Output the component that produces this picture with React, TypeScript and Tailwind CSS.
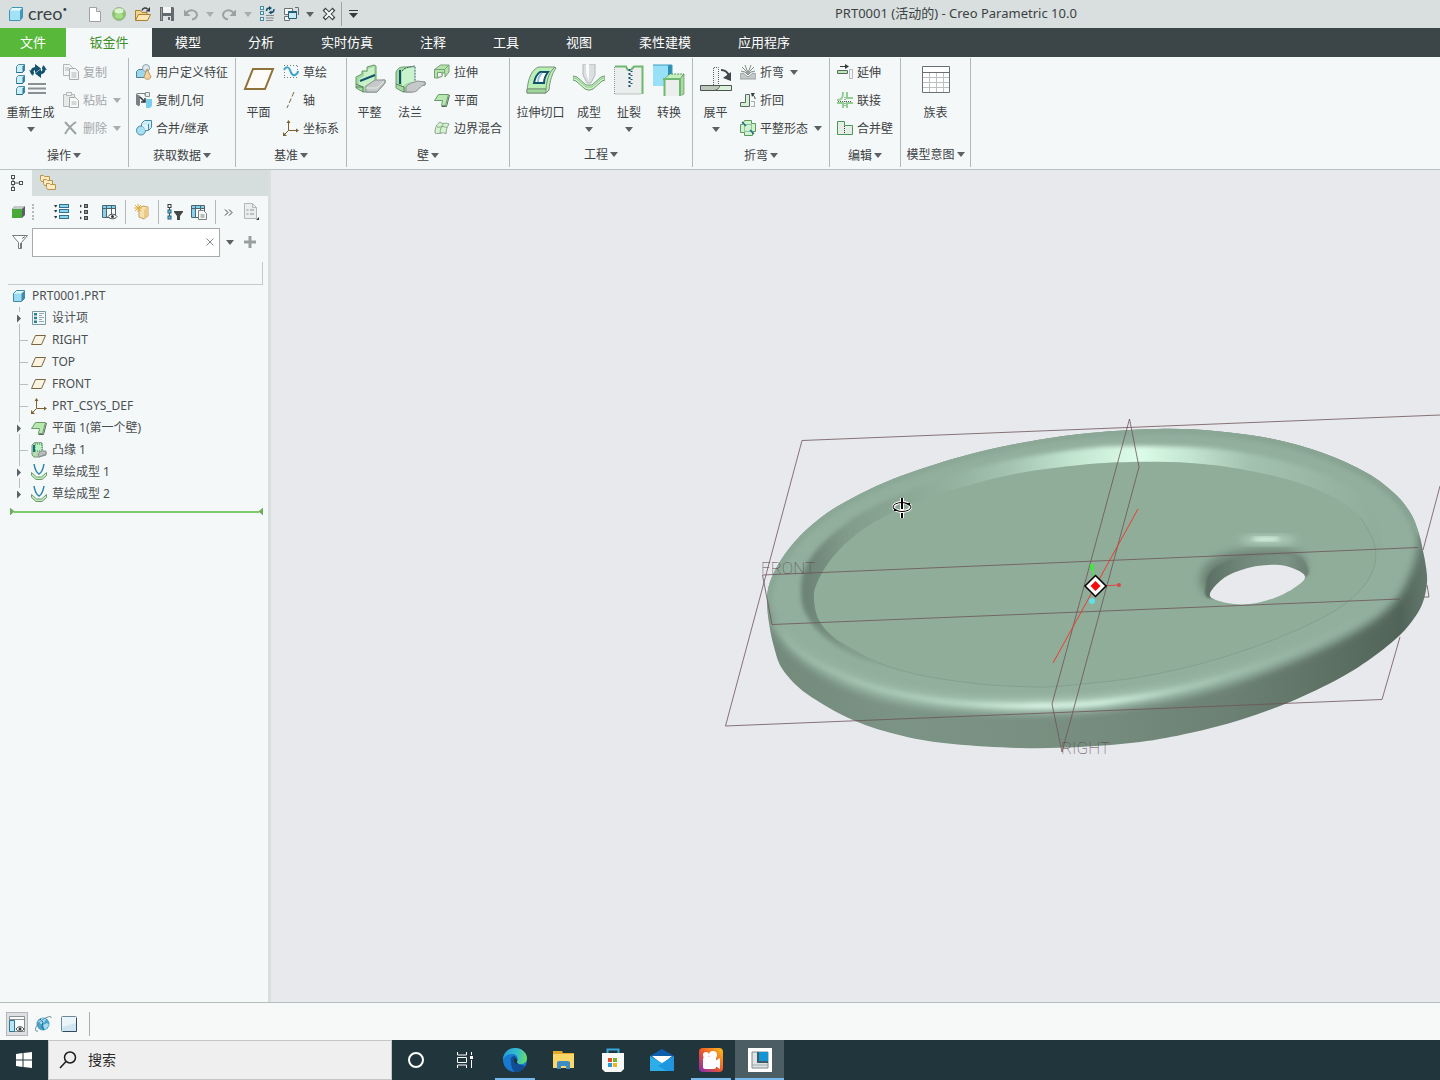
// src/App.tsx
/**
 * Creo Parametric workspace - sheet metal ribbon, model tree and graphics area
 */

import type { ReactNode } from 'react';
import clsx from 'clsx';

type Point = [number, number];

interface SvgProps {
  w?: number;
  h?: number;
  children: ReactNode;
}

function Svg({ w = 16, h = w, children }: SvgProps) {
  return (
    <svg width={w} height={h} viewBox={`0 0 ${w} ${h}`} fill="none" className="shrink-0" aria-hidden="true">
      {children}
    </svg>
  );
}

function Caret({ dim = false }: { dim?: boolean }) {
  return (
    <svg width="8" height="5" viewBox="0 0 8 5" className="shrink-0" aria-hidden="true">
      <path d="M0 0h8L4 5z" fill={dim ? '#a9adae' : '#5c6163'} />
    </svg>
  );
}

// ---------- Small cube shared by several icons ----------

function MiniCube({ x, y }: { x: number; y: number }) {
  return (
    <g transform={`translate(${x} ${y})`}>
      <path d="M.5 2.500l2-2h6v6l-2 2h-6z" fill="#cdeff8" stroke="#4a8aa3" />
      <path d="M6.500 2.500l2-2v6l-2 2z" fill="#2f7d9c" />
      <path d="M.5 8.500h6" stroke="#1c6f92" />
    </g>
  );
}

// ---------- Title bar icons ----------

const LogoIcon = () => (
  <Svg w={16}>
    <path d="M1.500 4.500l2.500-3h10.500v10L12 14.500H1.500z" fill="#a4e1f5" stroke="#3f93b3" />
    <path d="M2 4.500L4 2h10l-2 2.500z" fill="#e3f8fd" />
    <path d="M12 4.500L14.500 2v9.500L12 14.500z" fill="#4597b6" />
  </Svg>
);

const NewIcon = () => (
  <Svg w={16}>
    <path d="M2.500 1.500h7l4 4v10h-11z" fill="#fff" stroke="#9da3a3" />
    <path d="M9.500 1.500v4h4" fill="#e6eaea" stroke="#9da3a3" />
  </Svg>
);

const SphereIcon = () => (
  <Svg w={16}>
    <circle cx="8" cy="8" r="6.500" fill="#86c763" stroke="#9fb49a" />
    <ellipse cx="8" cy="5" rx="4.500" ry="2.800" fill="#dcf3d0" />
    <ellipse cx="8" cy="10" rx="4" ry="2.500" fill="#a9dd8c" />
  </Svg>
);

const OpenIcon = () => (
  <Svg w={18} h={16}>
    <path d="M1.500 14.500v-10h5l1.500 2h5v3" fill="#f3d18e" stroke="#ab7f2e" />
    <path d="M1.500 14.500l3-6h12l-3 6z" fill="#fde6b3" stroke="#ab7f2e" />
    <path d="M8 4.500c1-3 4-3 5.500-1.500" stroke="#353b3d" strokeWidth="1.500" />
    <path d="M16 1v4.500h-4.500z" fill="#353b3d" />
  </Svg>
);

const SaveIcon = () => (
  <Svg w={16}>
    <path d="M1 1h13l1 1v13H1z" fill="#646b6e" />
    <path d="M4 1h8v6H4z" fill="#f4f6f6" />
    <path d="M4 10h8v5H4z" fill="#dce1e1" />
    <path d="M9 11h2v3H9z" fill="#646b6e" />
    <path d="M2 2h1v12H2z" fill="#9aa1a3" />
  </Svg>
);

const UndoIcon = () => (
  <Svg w={16}>
    <path d="M3 7c4-4 9-3 10.500 0 1.500 3-.5 6-4.500 6.500" stroke="#9ba1a2" strokeWidth="2" />
    <path d="M1 3.500V10h6.500z" fill="#9ba1a2" />
  </Svg>
);

const RedoIcon = () => (
  <Svg w={16}>
    <path d="M13 7C9 3 4 4 2.500 7 1 10 3 13 7 13.500" stroke="#9ba1a2" strokeWidth="2" />
    <path d="M15 3.500V10H8.500z" fill="#9ba1a2" />
  </Svg>
);

const RegenSmallIcon = () => (
  <Svg w={16}>
    {[0, 5, 11].map((y) => (
      <rect key={y} x="1.500" y={y + 0.5} width="3" height="3" fill="#d8f3fa" stroke="#4a8aa3" />
    ))}
    <path d="M7 9.500h8M7 12h8M7 14.500h7" stroke="#868c8e" />
    <path d="M7.500 5c0-2 1.500-3 3-3M15 3c0 2-1 3.500-3 3.500" stroke="#12526f" strokeWidth="1.500" />
    <path d="M10 0l3 2-3 2.500zM12.500 4.500v4l-3-2z" fill="#12526f" />
  </Svg>
);

const WindowsIcon = () => (
  <Svg w={17} h={16}>
    <path d="M1.500 2.500h8v6h-8z" fill="#f6f8f8" stroke="#6b7274" />
    <path d="M1.500 10.500h5v4h-5z" fill="#f6f8f8" stroke="#6b7274" />
    <path d="M5.500 5.500h8v7h-8z" fill="#c9eaf5" stroke="#255e77" />
    <path d="M12 1.500h3.500V9" stroke="#6b7274" />
    <path d="M5.500 6h8" stroke="#255e77" strokeWidth="2" />
  </Svg>
);

const CloseWindowIcon = () => (
  <Svg w={14}>
    <path d="M2 2l10 10M12 2L2 12" stroke="#3e4446" strokeWidth="4" />
    <path d="M3 3l8 8M11 3l-8 8" stroke="#fff" strokeWidth="2" />
  </Svg>
);

// ---------- Ribbon icons (large) ----------

const RegenerateIcon = () => (
  <Svg w={32}>
    <MiniCube x={1} y={0} />
    <MiniCube x={1} y={11} />
    <MiniCube x={1} y={22} />
    <path d="M13 20h18M13 24.500h18M13 29h18" stroke="#8a8f91" strokeWidth="2" />
    <path d="M18 10c-2-2-1-5 2-5.500M28 3c2 2 1 5.500-2 6" stroke="#12526f" strokeWidth="3" />
    <path d="M20 0l6 4.500L20 9z" fill="#12526f" />
    <path d="M26 5v9l-6-4.500z" fill="#12526f" />
    <path d="M14 6l4 6 1-4zM32 6l-4-5-1 4z" fill="#12526f" />
  </Svg>
);

const PlaneLargeIcon = () => (
  <Svg w={32}>
    <path d="M10 5h20l-8 20H2z" fill="#fdfcf8" stroke="#8f713c" strokeWidth="2" />
  </Svg>
);

const FlatWallIcon = () => (
  <Svg w={32}>
    <path d="M2 13l6-3V7h5V3l7-2 2 1v15l9-1v3l-8 9H9l-7-4z" fill="#a4dba3" stroke="#699a6b" />
    <path d="M5 15l5-3V8h4V5l6-2v14l-9 5H5z" fill="#c8f1c8" />
    <path d="M6 17l15-6" stroke="#12526f" strokeWidth="2" />
    <path d="M12 22l9-6h10v3l-8 9H12z" fill="#c6c9ca" stroke="#8b9092" />
    <path d="M12 24h11l7-7" stroke="#e8eaea" />
    <path d="M2 20l7 3v5M2 23h7" stroke="#5d7b5f" />
  </Svg>
);

const FlangeIcon = () => (
  <Svg w={32}>
    <path d="M2 8c2-4 4-5 8-5h10v16l11-1v3l-8 1-5 6H9l-7-4z" fill="#a4dba3" stroke="#699a6b" />
    <path d="M8 8c3-4 7-4 13-5v15c-6 0-9 1-13 5z" fill="#c8f3cd" />
    <path d="M8 7c3-4 7-4 13-5v16" stroke="#3c5a66" strokeDasharray="2 1" />
    <path d="M6 6v14" stroke="#12526f" strokeWidth="2" />
    <path d="M12 23c4-5 8-4 11-6l8 1v3c-5 0-6 6-11 7h-8z" fill="#c6c9ca" stroke="#8b9092" />
    <path d="M2 20l8 3v5" stroke="#5d7b5f" />
  </Svg>
);

const ExtrudeCutIcon = () => (
  <Svg w={32}>
    <path d="M2 27C3 14 7 5 14 3h16l1 1c-4 6-6 12-7 22l-3 3H2z" fill="#b9efb4" stroke="#7a937b" />
    <path d="M2 25h19c1-10 3-17 9-22" stroke="#7a937b" />
    <path d="M9 19c1-5 3-9 6-11h8c-3 4-4 7-4 11z" fill="#fff" stroke="#12526f" strokeWidth="2" />
    <path d="M13 18c0-4 2-7 4-9" stroke="#8cc0d4" strokeWidth="2" />
    <path d="M2 25h19v4H2z" fill="#9fd69c" stroke="#7a937b" />
  </Svg>
);

const FormIcon = () => (
  <Svg w={32}>
    <path d="M10 0h12v11l-4 8h-4l-4-8z" fill="#dcdfe0" stroke="#b3b8ba" />
    <path d="M13 0h3v17l-3-8z" fill="#fbfcfc" />
    <path d="M0 12l4 1 9 8h6l9-8 4-1v4l-3 1-9 8-3 1h-2l-3-1-9-8-3-1z" fill="#cdf3c6" stroke="#6d9a71" />
    <path d="M1 14l3 1 9 8h6l9-8 3-1" stroke="#8fc78f" />
  </Svg>
);

const RipIcon = () => (
  <Svg w={32}>
    <path d="M2 2h11l3 4 3-4h11v28H2z" fill="#eceeee" />
    <path d="M2 2.500h11l2 4M18 6l3-3.500h8.500V30" stroke="#6fb86f" strokeWidth="2" />
    <path d="M1.500 3v27H28" stroke="#8b9092" strokeDasharray="1 1" />
    <path d="M16.500 5v18" stroke="#12526f" strokeWidth="2" strokeDasharray="2 2" />
    <path d="M18.500 7v14" stroke="#12526f" strokeWidth="2" strokeDasharray="1 3" />
  </Svg>
);

const ConvertIcon = () => (
  <Svg w={32}>
    <path d="M0 1h15v21H0z" fill="#98e0f7" />
    <path d="M15 1h4v11l-4 8z" fill="#2f8db0" />
    <path d="M0 1h19v10" stroke="#3b9cc0" />
    <path d="M11 15l6-5h14l-4 5z" fill="#c4f0c0" stroke="#5f9560" strokeDasharray="2 1" />
    <path d="M27 15l4-5v20l-4 2z" fill="#a7dba3" stroke="#3f6a43" strokeDasharray="1 1" />
    <path d="M12 16h15v16H12z" fill="#eceeee" />
    <path d="M10 15h17v17M11.500 15v17" stroke="#6fb86f" strokeWidth="2" />
  </Svg>
);

const UnbendIcon = () => (
  <Svg w={32}>
    <path d="M13.500 21V3.500h5V21" fill="#f3f4f4" stroke="#596063" strokeDasharray="1 1" />
    <path d="M.5 21.500h31v5H.5z" fill="#dcf1da" stroke="#4b564e" />
    <path d="M1 22h18c-1 3-3 4-5 4H1z" fill="#bcc6bd" />
    <path d="M20 21c-1 4-3 5-6 5.500" stroke="#4b564e" />
    <path d="M21 6c5 0 7 3 8 6" stroke="#41484a" strokeWidth="2" />
    <path d="M31 8v9l-8-3z" fill="#41484a" />
  </Svg>
);

const FamilyTableIcon = () => (
  <Svg w={32}>
    <path d="M2 3h28v25H2z" fill="#fff" />
    <path d="M9.500 8v20M16.500 8v20M23.500 8v20M2 13.500h28M2 18.500h28M2 23.500h28" stroke="#bcc0c1" />
    <path d="M2 8.500h28" stroke="#6b7173" />
    <path d="M2.500 2.500h27v26h-27z" stroke="#6b7173" />
  </Svg>
);

// ---------- Ribbon icons (small) ----------

const CopyIcon = () => (
  <Svg w={16}>
    <path d="M.5.500h6l3 3v8h-9z" fill="#f4f5f5" stroke="#b3b7b8" />
    <path d="M6.500 4.500h6l3 3v8h-9z" fill="#f4f5f5" stroke="#a8acad" />
    <path d="M8.500 9h5M8.500 11h5M8.500 13h5M2 4h4M2 6h4" stroke="#b3b7b8" />
  </Svg>
);

const PasteIcon = () => (
  <Svg w={16}>
    <path d="M.5 2.500h11v12H.5z" fill="#e8eaea" stroke="#b3b7b8" />
    <path d="M3.500.500h5v3h-5z" fill="#f4f5f5" stroke="#b3b7b8" />
    <path d="M6.500 5.500h6l3 3v7h-9z" fill="#f7f8f8" stroke="#a8acad" />
    <path d="M8.500 10h5M8.500 12h5" stroke="#b3b7b8" />
  </Svg>
);

const DeleteIcon = () => (
  <Svg w={16}>
    <path d="M2 2l11 12M13 2C8 5 5 9 2 14" stroke="#9da2a3" strokeWidth="2" />
  </Svg>
);

const UdfIcon = () => (
  <Svg w={16}>
    <path d="M.5 7.500l2-2h8v6l-2 2h-8z" fill="#9ad8ee" stroke="#52808f" />
    <circle cx="10" cy="4" r="3.500" fill="#dfe9ec" stroke="#8aa3ad" />
    <path d="M11 5l4 8c-1 3-6 3-7 0z" fill="#f4d59f" stroke="#b5965d" />
  </Svg>
);

const CopyGeometryIcon = () => (
  <Svg w={16}>
    <path d="M0 1.500l3 2v11l-3-2z" fill="#7a8183" />
    <path d="M1 1.500h8v2M3.500 3.500v10" stroke="#7a8183" />
    <path d="M4 5l5 5M9 6v4H5" stroke="#353b3d" strokeWidth="1.500" />
    <path d="M9.500.500h4v4h-4z" fill="#eceeee" stroke="#8b9092" />
    <path d="M10 7h6v7l-2 2h-4z" fill="#79cfee" />
  </Svg>
);

const MergeIcon = () => (
  <Svg w={16}>
    <path d="M5.500 3.500l3-3h7v7l-3 3h-7z" fill="#cdeef8" stroke="#4a8aa3" />
    <circle cx="5" cy="10.500" r="4.500" fill="#a5e0f3" stroke="#4a8aa3" />
    <path d="M6 5h5.500v5H9c0-2-1-3-3-4z" fill="#dff5fb" />
    <path d="M12.500 4v6" stroke="#4a8aa3" />
  </Svg>
);

const SketchIcon = () => (
  <Svg w={16}>
    <path d="M1 1.500h14M1 13.500h14M1.500 5v8M14.500 2v8" stroke="#7a8082" strokeDasharray="1 2" />
    <path d="M1 6c2-4 5-3 6 0s2 6 5 5c2-1 3-2 3-4" stroke="#3fa3c7" strokeWidth="2" />
  </Svg>
);

const AxisIcon = () => (
  <Svg w={16}>
    <path d="M11 0L4 16" stroke="#7a683f" strokeDasharray="5 2" />
  </Svg>
);

const CsysIcon = () => (
  <Svg w={16}>
    <path d="M5.500 1v9.500H15M5.500 10.500L1 15" stroke="#7b6231" />
    <path d="M5.500 0l2 3h-4zM16 10.500l-3 2v-4zM0 16v-4l4 4z" fill="#7b6231" />
  </Svg>
);

const ExtrudeIcon = () => (
  <Svg w={16}>
    <path d="M.5 5.500l6-4.500h8.500v7l-4 5V9H8v3l-4 2H.5z" fill="#b3e2aa" stroke="#7aa077" />
    <path d="M.5 5.500h10V9M10.500 5.500L15 1" stroke="#7aa077" />
    <path d="M3.500 8.500H8v4l-4.500 1z" fill="#f1f6f1" stroke="#7aa077" />
  </Svg>
);

const PlanarIcon = () => (
  <Svg w={16}>
    <path d="M4.500 2.500h10l-3 11h-4l1-5h-8z" fill="#b6e8af" stroke="#6a9a6b" />
    <path d="M15.500 3l-3 11.500h-5" stroke="#55685a" />
  </Svg>
);

const BlendIcon = () => (
  <Svg w={16}>
    <path d="M1 13c0-6 2-9 5-11 3 3 6 0 9 2-2 3-3 6-3 10-3-3-7 1-11-1z" fill="#d5f3cf" stroke="#8aa58b" />
    <path d="M6 14C6 9 8 5 10 3M3 7c3 1 6-2 10 1" stroke="#8aa58b" />
  </Svg>
);

const BendIcon = () => (
  <Svg w={16}>
    <path d="M0 10l3-1 5 4 5-4 3 1v5H0z" fill="#c4c8c9" stroke="#9a9fa1" />
    <path d="M1 7l4 1 3 3 3-3 4-1M2 3l4 4 2 4 2-4 4-4M5 1l3 8 3-8" stroke="#818c84" />
  </Svg>
);

const BendBackIcon = () => (
  <Svg w={16}>
    <path d="M.5 10.500h5v-8h4v12h-9z" fill="#d9eed6" stroke="#5b6a60" />
    <path d="M11.500 9.500h3v5h-3" stroke="#596063" strokeDasharray="1 1" />
    <path d="M15 7c0-2-1-3-2-4" stroke="#353b3d" />
    <path d="M11 1h4l-3 4z" fill="#353b3d" />
  </Svg>
);

const FlatPatternIcon = () => (
  <Svg w={16}>
    <path d="M4.500.500h7v3h4v8h-3v4h-8v-3h-4v-8h2z" fill="#cff3cf" stroke="#5a9a60" />
    <path d="M4.500 4.500h7v7h-7z" stroke="#5b8f78" strokeDasharray="1 1" />
    <path d="M2 2l4 4M10 10l4 4" stroke="#1f6c7f" strokeWidth="1.500" />
  </Svg>
);

const ExtendIcon = () => (
  <Svg w={16}>
    <path d="M.5 6.500h10v3H.5z" fill="#b9e8b2" stroke="#5b6a60" />
    <path d="M3 2.500h6" stroke="#353b3d" />
    <path d="M8 0l4 2.500L8 5z" fill="#353b3d" />
    <path d="M12.500 5.500h3v9h-3z" stroke="#7a8183" strokeDasharray="1 1" />
  </Svg>
);

const JoinIcon = () => (
  <Svg w={16}>
    <path d="M0 8c5 0 6-2 6-8M10 0v6h6M0 11h6v5M10 16v-5h6" stroke="#8fcf8f" strokeWidth="2" />
    <path d="M1 9.500h14M8 5v9" stroke="#55685a" strokeDasharray="1 1" />
  </Svg>
);

const MergeWallsIcon = () => (
  <Svg w={16}>
    <path d="M.5 1.500h7v4h8v9H.5z" fill="#e6ece6" stroke="#4b9a53" />
    <path d="M7.500 6v8" stroke="#353b3d" strokeDasharray="1 1" />
  </Svg>
);

// ---------- Model tree icons ----------

const PartIcon = () => (
  <Svg w={14}>
    <path d="M1.500 4.500l3-3h8v8l-3 3h-8z" fill="#9adcf3" stroke="#3f8aa8" />
    <path d="M2 4.500L4.500 2H12L9.500 4.500z" fill="#ddf6fc" />
    <path d="M9.500 4.500L12.500 2v7.500l-3 3z" fill="#3f8aa8" />
  </Svg>
);

const DesignItemsIcon = () => (
  <Svg w={16}>
    <path d="M1.500 1.500h13v13h-13z" fill="#f3fafc" stroke="#7b98a3" />
    <path d="M3 3h3v2.500H3zM3 6.800h3v2.500H3zM3 10.500h3V13H3z" fill="#2b8093" />
    <path d="M8 3.500h5M8 5.500h3M8 7.500h5M8 9.500h3M8 11.500h5" stroke="#9aa7ab" />
  </Svg>
);

const DatumPlaneIcon = () => (
  <Svg w={16}>
    <path d="M4.500 3.500h10l-4 9h-10z" fill="#fbf3e2" stroke="#7a653f" />
  </Svg>
);

const SketchFormIcon = () => (
  <Svg w={16}>
    <path d="M3 0c1 6 3 9 5 10 2-1 4-4 5-10" stroke="#3185a6" strokeWidth="1.500" />
    <path d="M.5 8.500l5 4.500h5l5-4.500v3l-4.500 4h-6l-4.500-4z" fill="#c1edba" stroke="#6d9a71" />
  </Svg>
);

const FlangeSmallIcon = () => (
  <Svg w={16}>
    <path d="M1 3l2-2c3-1 6-1 8 0v8l4 1v3l-7 2H3l-2-2z" fill="#b3dfb0" stroke="#7a937b" />
    <path d="M4 2h7v7H4z" fill="#b7f2c2" stroke="#3f7a60" strokeDasharray="1 1" />
    <path d="M3 3v7" stroke="#12707c" strokeWidth="2" />
    <path d="M7 12l3-3h5v3l-7 3z" fill="#b9bdbe" stroke="#8b9092" />
  </Svg>
);

const TreeTabIcon = () => (
  <Svg w={16}>
    <path d="M5 4v2M5 10v2M7 8h4" stroke="#4c5254" />
    {[[3.5, 0.5], [3.5, 6.5], [3.5, 12.5], [11.5, 6.5]].map(([x, y]) => (
      <rect key={`${x}-${y}`} x={x} y={y} width="3" height="3" fill="#fff" stroke="#4c5254" />
    ))}
  </Svg>
);

const FolderTabIcon = () => (
  <Svg w={16}>
    {[[0.5, 0.5], [3.5, 4.5], [6.5, 8.5]].map(([x, y]) => (
      <path key={x} d={`M${x} ${y}h3l1 1h5v5h-8l-1-2z`} fill="#fdebbf" stroke="#b8954f" />
    ))}
  </Svg>
);

const GreenCubeIcon = () => (
  <Svg w={14}>
    <path d="M0 4l3-3h10v9l-3 3H0z" fill="#5b6163" />
    <path d="M0 4l3-3h10l-3 3z" fill="#c4c8c9" />
    <path d="M0 4h10v9H0z" fill="#4aaa39" />
  </Svg>
);

const ExpandListIcon = () => (
  <Svg w={16}>
    {[1, 6, 12].map((y) => (
      <g key={y}>
        <path d={`M0 ${y}h3v1l-1.500 1.500z`} fill="#353b3d" />
        <rect x="5.500" y={y - 0.5} width="9" height="3" fill="#8ad4ef" stroke="#34718c" />
      </g>
    ))}
  </Svg>
);

const CollapseListIcon = () => (
  <Svg w={10} h={16}>
    {[1, 7, 13].map((y) => (
      <g key={y}>
        <path d={`M0 ${y - 0.5}v3l2-1.500z`} fill="#353b3d" />
        <rect x="4.500" y={y - 0.5} width="3" height="3" fill="#8a8f91" stroke="#43494b" />
      </g>
    ))}
  </Svg>
);

function TableIcon({ doc = false }: { doc?: boolean }) {
  return (
    <Svg w={16}>
      <path d="M.5 1.500h13v12H.5z" fill="#fff" />
      <path d="M1 2h3.500v11H1zM5 2h8v3H5z" fill="#86d2ee" />
      <path d="M.5 1.500h13v12H.5zM4.500 1.500v12M9.500 1.500v12M.5 4.500h13" stroke="#4d6570" />
      {doc ? (
        <>
          <path d="M7.500 6.500h5l3 3v6h-8z" fill="#f6f8f8" stroke="#7a8183" />
          <path d="M9.500 11h4M9.500 13h4" stroke="#7a8183" />
        </>
      ) : (
        <>
          <path d="M6 12.500c2-3 7-3 9 0-2 3-7 3-9 0z" fill="#fff" stroke="#43494b" />
          <circle cx="10.500" cy="12.500" r="1.500" fill="#353b3d" />
        </>
      )}
    </Svg>
  );
}

const InsertIcon = () => (
  <Svg w={16}>
    <path d="M5 4l4-2 5 1v9l-4 3-5-2z" fill="#f8dfae" stroke="#c19f62" />
    <path d="M10 6v9l4-3V3z" fill="#edc988" />
    <path d="M4 0v8M0 4h8M1 1l6 6M7 1L1 7" stroke="#dfae3c" />
  </Svg>
);

const TreeFilterIcon = () => (
  <Svg w={16}>
    <path d="M2.500 4v2M2.500 9v3" stroke="#39525d" />
    <rect x="1" y=".5" width="3" height="3" fill="#fff" stroke="#353b3d" />
    <rect x="1" y="6" width="3" height="3" fill="#78cdec" stroke="#1d5871" />
    <rect x="1" y="12" width="3" height="3" fill="#78cdec" stroke="#1d5871" />
    <path d="M7 7h9v1l-3 4v4h-3v-4L7 8z" fill="#43494b" />
  </Svg>
);

const SettingsDocIcon = () => (
  <Svg w={18} h={20}>
    <path d="M1.500 1.500h8l4 4v11h-12z" fill="#eceeee" stroke="#b3b7b8" />
    <path d="M3.500 8h2M7 8h4M3.500 12h2M7 12h4" stroke="#8b9092" />
    <path d="M9.500 1.500v4h4" stroke="#b3b7b8" />
    <path d="M16 15v3h-3z" fill="#353b3d" />
  </Svg>
);

const FunnelIcon = () => (
  <Svg w={16}>
    <path d="M.5 1.500h15l-6 7v6h-3v-6z" fill="#fff" stroke="#757b7d" />
    <path d="M10 4.500l3-2M8.500 9v5" stroke="#757b7d" />
  </Svg>
);

// ---------- Ribbon ----------

interface SmallItem {
  label: string;
  icon: ReactNode;
  disabled?: boolean;
  menu?: boolean;
}

interface LargeItem {
  label: string;
  icon: ReactNode;
  menu?: boolean;
  width: string;
}

interface RibbonGroup {
  title: string;
  width: string;
  large: LargeItem[];
  small: SmallItem[];
  smallPad?: string;
}

const groups: RibbonGroup[] = [
  {
    title: '操作',
    width: 'w-[129px]',
    large: [{ label: '重新生成', icon: <RegenerateIcon />, menu: true, width: 'w-[61px]' }],
    small: [
      { label: '复制', icon: <CopyIcon />, disabled: true },
      { label: '粘贴', icon: <PasteIcon />, disabled: true, menu: true },
      { label: '删除', icon: <DeleteIcon />, disabled: true, menu: true },
    ],
  },
  {
    title: '获取数据',
    width: 'w-[107px]',
    large: [],
    small: [
      { label: '用户定义特征', icon: <UdfIcon /> },
      { label: '复制几何', icon: <CopyGeometryIcon /> },
      { label: '合并/继承', icon: <MergeIcon /> },
    ],
    smallPad: 'pl-[7px]',
  },
  {
    title: '基准',
    width: 'w-[111px]',
    large: [{ label: '平面', icon: <PlaneLargeIcon />, width: 'w-[45px]' }],
    small: [
      { label: '草绘', icon: <SketchIcon /> },
      { label: '轴', icon: <AxisIcon /> },
      { label: '坐标系', icon: <CsysIcon /> },
    ],
  },
  {
    title: '壁',
    width: 'w-[163px]',
    large: [
      { label: '平整', icon: <FlatWallIcon />, width: 'w-[45px]' },
      { label: '法兰', icon: <FlangeIcon />, width: 'w-9' },
    ],
    small: [
      { label: '拉伸', icon: <ExtrudeIcon /> },
      { label: '平面', icon: <PlanarIcon /> },
      { label: '边界混合', icon: <BlendIcon /> },
    ],
    smallPad: 'pl-1.5',
  },
  {
    title: '工程',
    width: 'w-[183px]',
    large: [
      { label: '拉伸切口', icon: <ExtrudeCutIcon />, width: 'w-[61px]' },
      { label: '成型', icon: <FormIcon />, menu: true, width: 'w-9' },
      { label: '扯裂', icon: <RipIcon />, menu: true, width: 'w-[44px]' },
      { label: '转换', icon: <ConvertIcon />, width: 'w-9' },
    ],
    small: [],
  },
  {
    title: '折弯',
    width: 'w-[137px]',
    large: [{ label: '展平', icon: <UnbendIcon />, menu: true, width: 'w-[45px]' }],
    small: [
      { label: '折弯', icon: <BendIcon />, menu: true },
      { label: '折回', icon: <BendBackIcon /> },
      { label: '平整形态', icon: <FlatPatternIcon />, menu: true },
    ],
  },
  {
    title: '编辑',
    width: 'w-[71px]',
    large: [],
    small: [
      { label: '延伸', icon: <ExtendIcon /> },
      { label: '联接', icon: <JoinIcon /> },
      { label: '合并壁', icon: <MergeWallsIcon /> },
    ],
    smallPad: 'pl-[7px]',
  },
  {
    title: '模型意图',
    width: 'w-[70px]',
    large: [{ label: '族表', icon: <FamilyTableIcon />, width: 'w-[69px]' }],
    small: [],
  },
];

function LargeButton({ item }: { item: LargeItem }) {
  return (
    <button type="button" className={clsx('flex h-full flex-col items-center pt-1.5', item.width)}>
      {item.icon}
      <span className="mt-[7px] whitespace-nowrap leading-5">{item.label}</span>
      {item.menu && (
        <span className="mt-1">
          <Caret />
        </span>
      )}
    </button>
  );
}

function SmallButton({ item }: { item: SmallItem }) {
  return (
    <button
      type="button"
      disabled={item.disabled}
      className={clsx('flex h-7 items-center gap-1 whitespace-nowrap', item.disabled && 'text-[#a3a7a9]')}
    >
      {item.icon}
      <span className="mt-0.5">{item.label}</span>
      {item.menu && (
        <span className="ml-0.5">
          <Caret dim={item.disabled} />
        </span>
      )}
    </button>
  );
}

function Ribbon() {
  return (
    <section className="flex h-[113px] border-b border-[#b9c3c2] bg-[#f5f8f9] text-xs">
      {groups.map((group) => (
        <div key={group.title} className={clsx('flex shrink-0 flex-col pt-px pb-0.5', group.width)}>
          <div className="flex h-full flex-col border-r border-[#b3b8b9]">
            <div className="flex h-[86px]">
              {group.large.map((item) => (
                <LargeButton key={item.label} item={item} />
              ))}
              {group.small.length > 0 && (
                <div className={clsx('flex flex-col', group.smallPad ?? 'pl-0.5')}>
                  {group.small.map((item) => (
                    <SmallButton key={item.label} item={item} />
                  ))}
                </div>
              )}
            </div>
            <button type="button" className="flex items-center justify-center gap-0.5 whitespace-nowrap">
              <span className="mt-0.5 leading-6">{group.title}</span>
              <Caret />
            </button>
          </div>
        </div>
      ))}
    </section>
  );
}

// ---------- Title bar and tabs ----------

const quickAccess: { label: string; icon: ReactNode; menu?: boolean; dim?: boolean }[] = [
  { label: '新建', icon: <NewIcon /> },
  { label: '连接', icon: <SphereIcon /> },
  { label: '打开', icon: <OpenIcon /> },
  { label: '保存', icon: <SaveIcon /> },
  { label: '撤消', icon: <UndoIcon />, menu: true, dim: true },
  { label: '重做', icon: <RedoIcon />, menu: true, dim: true },
  { label: '重新生成', icon: <RegenSmallIcon /> },
  { label: '窗口', icon: <WindowsIcon />, menu: true },
  { label: '关闭', icon: <CloseWindowIcon /> },
];

function TitleBar() {
  return (
    <header className="flex h-7 items-center bg-[#d8dfde] text-[13px] text-[#3c4244]">
      <div className="flex w-[83px] items-center gap-1 pl-2">
        <LogoIcon />
        <span className="flex items-center pb-0.5 font-['Lato'] text-lg leading-6">
          creo
          <span className="pb-2 text-[8px] leading-none">•</span>
        </span>
      </div>
      {quickAccess.map(({ label, icon, menu, dim }) => (
        <div key={label} className="flex items-center">
          <button type="button" aria-label={label} className="flex w-6 justify-center">
            {icon}
          </button>
          {menu && (
            <button type="button" aria-label={`${label}菜单`} className="flex w-3.5 justify-center">
              <Caret dim={dim} />
            </button>
          )}
        </div>
      ))}
      <button
        type="button"
        aria-label="自定义快速访问工具栏"
        className="flex h-6 w-6 items-center justify-center border-l border-[#9ea5a6]"
      >
        <Svg w={9} h={8}>
          <path d="M0 .5h9" stroke="#353b3d" />
          <path d="M0 3h9L4.500 8z" fill="#353b3d" />
        </Svg>
      </button>
      <h1 className="ml-[470px] whitespace-nowrap">PRT0001 (活动的) - Creo Parametric 10.0</h1>
    </header>
  );
}

const tabs = ['模型', '分析', '实时仿真', '注释', '工具', '视图', '柔性建模', '应用程序'];

function TabBar() {
  return (
    <nav className="flex h-[29px] bg-[#3c4547] text-[13px] text-white">
      <button type="button" className="w-[66px] bg-[#57b83a]">
        文件
      </button>
      <button type="button" className="w-[86px] bg-[#f5f8f9] text-[#3f8f2c]">
        钣金件
      </button>
      {tabs.map((tab) => (
        <button key={tab} type="button" className="mr-px px-[23px]">
          {tab}
        </button>
      ))}
    </nav>
  );
}

// ---------- Model tree ----------

const treeItems: { label: string; icon: ReactNode; expandable?: boolean }[] = [
  { label: '设计项', icon: <DesignItemsIcon />, expandable: true },
  { label: 'RIGHT', icon: <DatumPlaneIcon /> },
  { label: 'TOP', icon: <DatumPlaneIcon /> },
  { label: 'FRONT', icon: <DatumPlaneIcon /> },
  { label: 'PRT_CSYS_DEF', icon: <CsysIcon /> },
  { label: '平面 1(第一个壁)', icon: <PlanarIcon />, expandable: true },
  { label: '凸缘 1', icon: <FlangeSmallIcon /> },
  { label: '草绘成型 1', icon: <SketchFormIcon />, expandable: true },
  { label: '草绘成型 2', icon: <SketchFormIcon />, expandable: true },
];

function TreeBranch({ expandable, last }: { expandable?: boolean; last: boolean }) {
  return (
    <Svg w={16} h={22}>
      <path d={last ? 'M7.500 0v5' : expandable ? 'M7.500 0v5M7.500 17v5' : 'M7.500 0v22M8 11.500h8'} stroke="#b9bebf" />
      {expandable && <path d="M5 7.500l4 4-4 4z" fill="#5a6062" />}
    </Svg>
  );
}

function TreeToolbar() {
  return (
    <div className="flex h-8 items-center pl-3">
      <button type="button" aria-label="显示">
        <GreenCubeIcon />
      </button>
      <span className="mr-5 ml-1.5 h-4 border-l-2 border-dotted border-[#b5babb]" />
      <button type="button" aria-label="全部展开">
        <ExpandListIcon />
      </button>
      <button type="button" aria-label="全部折叠" className="ml-2.5">
        <CollapseListIcon />
      </button>
      <button type="button" aria-label="树列" className="ml-3">
        <TableIcon />
      </button>
      <span className="ml-[7px] h-6 border-l border-[#b3b8b9]" />
      <button type="button" aria-label="插入" className="ml-2">
        <InsertIcon />
      </button>
      <span className="ml-2 h-6 border-l border-[#b3b8b9]" />
      <button type="button" aria-label="树过滤器" className="ml-2">
        <TreeFilterIcon />
      </button>
      <button type="button" aria-label="保存树" className="ml-2">
        <TableIcon doc />
      </button>
      <span className="ml-2 h-6 border-l border-[#b3b8b9]" />
      <button type="button" aria-label="更多" className="ml-2">
        <Svg w={9}>
          <path d="M1 1.500l3 3-3 3M5 1.500l3 3-3 3" stroke="#353b3d" />
        </Svg>
      </button>
      <button type="button" aria-label="设置" className="ml-2.5">
        <SettingsDocIcon />
      </button>
    </div>
  );
}

function ModelTree() {
  return (
    <aside className="flex w-[271px] shrink-0 flex-col border-r-3 border-[#d8dfde] bg-[#f5f8f9] text-xs text-[#4a4f51]">
      <div className="flex h-[26px] bg-[#d6dedd]">
        <button type="button" aria-label="模型树" className="flex w-8 items-center justify-center bg-[#f5f8f9]">
          <TreeTabIcon />
        </button>
        <button type="button" aria-label="文件夹浏览器" className="flex w-8 items-center justify-center">
          <FolderTabIcon />
        </button>
      </div>
      <TreeToolbar />
      <div className="flex h-7 items-center pl-3">
        <FunnelIcon />
        <div className="ml-1 flex h-[29px] w-[188px] items-center border border-[#a6abac] bg-white">
          <input type="text" aria-label="过滤模型树" className="h-full min-w-0 flex-1 px-1 outline-none" />
          <button type="button" aria-label="清除" className="mr-1">
            <Svg w={10}>
              <path d="M1.500 1.500l7 7M8.500 1.500l-7 7" stroke="#858a8b" />
            </Svg>
          </button>
        </div>
        <button type="button" aria-label="过滤选项" className="ml-1.5">
          <Caret />
        </button>
        <button type="button" aria-label="添加" className="ml-2.5">
          <Svg w={12}>
            <path d="M6 0v12M0 6h12" stroke="#999e9f" strokeWidth="3" />
          </Svg>
        </button>
      </div>
      <div className="mt-1.5 mr-[5px] ml-2 h-[23px] border-r border-b border-[#c5cbcb]" />
      <ul className="pl-3">
        <li className="flex h-[22px] items-center gap-1.5">
          <PartIcon />
          PRT0001.PRT
        </li>
        {treeItems.map(({ label, icon, expandable }, i) => (
          <li key={label} className="flex h-[22px] items-center">
            <TreeBranch expandable={expandable} last={i === treeItems.length - 1} />
            <span className="ml-[3px]">{icon}</span>
            <span className="ml-[5px] whitespace-nowrap">{label}</span>
          </li>
        ))}
      </ul>
      <div className="mt-[3px] mr-[5px] ml-2.5 flex items-center">
        <Svg w={4} h={7}>
          <path d="M.5 0v7M1 1l3 2.500L1 6z" fill="#6cae5c" stroke="#6cae5c" />
        </Svg>
        <span className="h-0.5 flex-1 bg-[#7fca6b]" />
        <Svg w={4} h={7}>
          <path d="M3.500 0v7M3 1L0 3.500 3 6z" fill="#6cae5c" stroke="#6cae5c" />
        </Svg>
      </div>
    </aside>
  );
}

// ---------- Graphics area ----------

// Catmull-Rom spline through the given points
function spline(points: Point[], closed = false) {
  const n = points.length;
  const at = (i: number) => (closed ? points[(i + n) % n] : points[Math.max(0, Math.min(n - 1, i))]);
  let d = `M${points[0][0]} ${points[0][1]}`;
  for (let i = 0; i < (closed ? n : n - 1); i++) {
    const [p0, p1, p2, p3] = [at(i - 1), at(i), at(i + 1), at(i + 2)];
    const c1 = [p1[0] + (p2[0] - p0[0]) / 6, p1[1] + (p2[1] - p0[1]) / 6];
    const c2 = [p2[0] - (p3[0] - p1[0]) / 6, p2[1] - (p3[1] - p1[1]) / 6];
    d += `C${c1[0].toFixed(1)} ${c1[1].toFixed(1)} ${c2[0].toFixed(1)} ${c2[1].toFixed(1)} ${p2[0]} ${p2[1]}`;
  }
  return closed ? `${d}Z` : d;
}

const upperEdge: Point[] = [
  [767, 600], [770, 582], [781, 560], [800, 536], [827, 513], [860, 494], [893, 479], [927, 467], [960, 457],
  [1010, 445], [1080, 434], [1157, 429], [1215, 431], [1273, 439], [1323, 453], [1367, 473], [1395, 494],
  [1411, 514], [1419, 534],
];

const silhouette = spline(
  [
    ...upperEdge,
    [1423, 551], [1426, 567], [1427, 583], [1423, 602], [1415, 617], [1400, 635], [1373, 657], [1340, 678],
    [1290, 702], [1240, 720], [1190, 733], [1140, 742], [1080, 747], [1020, 748], [953, 744], [903, 736],
    [853, 720], [807, 694], [783, 670], [774, 647], [769, 623],
  ],
  true,
);

const topFace = spline(
  [
    ...upperEdge,
    [1417, 554], [1410, 575], [1397, 599], [1371, 622], [1323, 648], [1257, 675], [1190, 695], [1123, 706],
    [1060, 711], [987, 711], [920, 706], [870, 695], [827, 676], [793, 652], [775, 627],
  ],
  true,
);

const rimHighlight = spline([
  [772, 622], [797, 650], [830, 670], [870, 686], [920, 698], [970, 704], [1020, 706], [1070, 705], [1107, 702],
  [1157, 694], [1207, 682], [1273, 660], [1340, 630], [1387, 600], [1407, 567], [1410, 533],
]);

const floorRight: Point[] = [[1360, 517], [1373, 540], [1375, 563], [1363, 587]];

const floorBottom: Point[] = [
  [1333, 612], [1273, 640], [1207, 662], [1140, 677], [1073, 685], [1037, 687], [980, 684], [920, 675],
  [877, 662], [840, 642],
];

const floor = spline(
  [
    [814, 600], [817, 583], [832, 558], [858, 533], [893, 512], [927, 498], [970, 485], [1020, 473], [1080, 465],
    [1130, 462], [1190, 463], [1240, 469], [1293, 481], [1333, 497], ...floorRight, ...floorBottom, [820, 622],
  ],
  true,
);

// The bottom half stays inside the floor so that only the lit half of the bead shows
const groove = spline(
  [
    [801, 592], [805, 568], [824, 542], [860, 514], [910, 490], [970, 470], [1020, 458], [1080, 449], [1123, 446],
    [1190, 447], [1240, 452], [1290, 463], [1333, 479], [1364, 502], [1379, 527], [1380, 553], [1360, 582],
    [1320, 607], [1260, 634], [1190, 655], [1120, 668], [1050, 674], [980, 675], [920, 670], [865, 660],
    [826, 638], [806, 614],
  ],
  true,
);

const holeShadow = spline(
  [
    [1207, 594], [1200, 580], [1207, 564], [1228, 553], [1262, 549], [1294, 551], [1305, 560], [1304, 572],
    [1270, 575], [1225, 590],
  ],
  true,
);

const holeWall = spline(
  [
    [1211, 598], [1206, 585], [1212, 570], [1234, 559], [1266, 554], [1296, 556], [1306, 564], [1305, 577],
    [1260, 585],
  ],
  true,
);

const hole = spline(
  [
    [1210, 596], [1218, 583], [1233, 573], [1257, 566], [1280, 565], [1297, 570], [1305, 577], [1297, 586],
    [1277, 597], [1250, 604], [1227, 603],
  ],
  true,
);

const wallStops: [number, string][] = [
  [0, '#738a7b'], [0.2, '#7c9485'], [0.45, '#788f80'], [0.7, '#6c8174'], [0.88, '#5b6e62'], [0.96, '#52645a'],
  [1, '#63786c'],
];

const grooveStops: [number, string][] = [
  [0, '#6a8173'], [0.03, '#728a7b'], [0.08, '#829c8b'], [0.17, '#8aa794'], [0.26, '#93b19e'], [0.36, '#a4c4b1'],
  [0.46, '#c0e3ce'], [0.58, '#dcfde8'], [0.67, '#c3e4d0'], [0.77, '#a3c2af'], [0.9, '#97b5a2'], [1, '#8fac9a'],
];

const highlightStops: [number, string, number][] = [
  [0, '#a3c2af', 0.3], [0.15, '#a8c7b4', 0.9], [0.3, '#b9dac6', 1], [0.42, '#e0fbea', 1], [0.52, '#d6f5e2', 1],
  [0.64, '#afd0bc', 0.9], [0.8, '#9dbaa8', 0.6], [1, '#94b09f', 0.1],
];

function GraphicsArea() {
  return (
    <main className="relative flex-1 overflow-hidden bg-[#e7e9ed]">
      <svg
        viewBox="271 170 1169 832"
        preserveAspectRatio="xMinYMin slice"
        className="absolute inset-0 size-full"
        fill="none"
        role="img"
        aria-label="PRT0001"
      >
        <defs>
          <linearGradient id="wall" gradientUnits="userSpaceOnUse" x1="767" x2="1427" y1="0" y2="0">
            {wallStops.map(([offset, color]) => (
              <stop key={offset} offset={offset} stopColor={color} />
            ))}
          </linearGradient>
          <linearGradient id="groove" gradientUnits="userSpaceOnUse" x1="801" x2="1383" y1="0" y2="0">
            {grooveStops.map(([offset, color]) => (
              <stop key={offset} offset={offset} stopColor={color} />
            ))}
          </linearGradient>
          <linearGradient id="rim" gradientUnits="userSpaceOnUse" x1="772" x2="1410" y1="0" y2="0">
            {highlightStops.map(([offset, color, opacity]) => (
              <stop key={offset} offset={offset} stopColor={color} stopOpacity={opacity} />
            ))}
          </linearGradient>
          <linearGradient id="bore" gradientUnits="userSpaceOnUse" x1="1205" x2="1307" y1="0" y2="0">
            <stop offset="0" stopColor="#5a6e62" />
            <stop offset=".4" stopColor="#72897b" />
            <stop offset=".8" stopColor="#7b9385" />
            <stop offset="1" stopColor="#6b8174" />
          </linearGradient>
          <clipPath id="body">
            <path d={silhouette} />
          </clipPath>
          <filter id="blur1" x="-10%" y="-40%" width="120%" height="180%">
            <feGaussianBlur stdDeviation="1" />
          </filter>
          <filter id="blur2" x="-10%" y="-10%" width="120%" height="120%">
            <feGaussianBlur stdDeviation="2" />
          </filter>
          <filter id="blur4" x="-30%" y="-30%" width="160%" height="160%">
            <feGaussianBlur stdDeviation="4" />
          </filter>
        </defs>

        {/* Part */}
        <path d={silhouette} fill="url(#wall)" />
        <g clipPath="url(#body)">
          <path d={topFace} fill="#92af9d" filter="url(#blur4)" />
          <path d={spline(upperEdge)} stroke="#8ca997" strokeWidth="6" filter="url(#blur2)" />
          <path d={rimHighlight} stroke="url(#rim)" strokeWidth="12" opacity=".5" filter="url(#blur4)" />
          <path d={rimHighlight} stroke="url(#rim)" strokeWidth="4" filter="url(#blur2)" />
        </g>
        <path d={groove} fill="url(#groove)" filter="url(#blur2)" />
        <path d={floor} fill="#90ad9a" />
        <path d={spline([...floorRight, ...floorBottom])} stroke="#819c8b" opacity=".8" />
        <path d={holeShadow} fill="#6d8476" filter="url(#blur4)" />
        <path d={holeWall} fill="url(#bore)" filter="url(#blur1)" />
        <ellipse cx="1268" cy="540" rx="28" ry="4" fill="#b4d5c1" filter="url(#blur4)" />
        <ellipse cx="1266" cy="539" rx="14" ry="2" fill="#def9e8" filter="url(#blur2)" />
        <path d={hole} fill="#e7e9ed" />

        {/* Datum planes */}
        <g stroke="#6d5357" strokeWidth=".8">
          <path d="M1423 550L1440 486M1440 415L802 440.500L725.500 726L1382 699.500L1400 637" />
          <path d="M1418 547.500L762.500 575L772 624.500L1400 599M1427 585L1429 597H1424" />
          <path d="M1129.500 419L1139 467L1062 752L1052 704Z" />
        </g>
        <path d="M1138 509L1053 663" stroke="#ee3b32" />

        <g fill="#5d484c" fontFamily="Roboto, sans-serif" fontSize="17" fontWeight="100">
          <text x="761" y="574">FRONT</text>
          <text x="1061" y="754">RIGHT</text>
        </g>

        {/* Spin center */}
        <path d="M1095 580L1092 567" stroke="#4fe04f" strokeWidth="2" />
        <path d="M1090 564h4v6h-4z" fill="#46e246" />
        <path d="M1100 586L1119 585" stroke="#d64a45" />
        <circle cx="1119" cy="585" r="2" fill="#d64a45" />
        <circle cx="1092" cy="601" r="3" fill="#5fe0e6" />
        <path d="M1095.500 575.500l10.500 10.500-10.500 10.500-10.500-10.500z" fill="#fff" stroke="#000" strokeWidth="1.500" />
        <path d="M1095.500 581l5 5-5 5-5-5z" fill="#f50d0d" />

        {/* Spin cursor */}
        <ellipse cx="902" cy="507" rx="8.500" ry="4.500" stroke="#fff" strokeWidth="3" />
        <path d="M902 498v20" stroke="#fff" strokeWidth="4" />
        <ellipse cx="902" cy="507" rx="9" ry="4.500" stroke="#000" />
        <path d="M902 498v11M902 513v5" stroke="#000" strokeWidth="2" />
        <path d="M904 503h6v3zM894 511v-3l5 3z" fill="#000" />
      </svg>
    </main>
  );
}

// ---------- Status bar and taskbar ----------

function StatusBar() {
  return (
    <footer className="flex h-[38px] items-center border-t border-[#b4bcbc] bg-[#f6f9f8] pt-1 pl-1.5">
      <button
        type="button"
        aria-label="导航器"
        className="flex h-6 w-[22px] items-center justify-center border border-[#b3b7b8] bg-[#dddfe2]"
      >
        <Svg w={16}>
          <path d="M.5.500h15v15H.5z" fill="#fafbfb" stroke="#8b9092" />
          <path d="M1 3.500h14" stroke="#8b9092" />
          <path d="M.5 4.500h5v11h-5z" fill="#b9e4f4" stroke="#2a7696" />
          <path d="M7 13c2-3 6-3 8 0-2 3-6 3-8 0z" fill="#fff" stroke="#43494b" />
          <circle cx="11" cy="13" r="1.500" fill="#353b3d" />
        </Svg>
      </button>
      <button type="button" aria-label="浏览器" className="ml-1.5">
        <Svg w={18}>
          <circle cx="9" cy="9" r="6.500" fill="#4aa3cb" />
          <path d="M4 7l4-4 4 1-2 4-3 1zM9 10l4-2 2 2-4 5z" fill="#a6dcf0" />
          <path d="M6 4l3 3-1 5 2 3" stroke="#216d92" />
          <path d="M4 16c-5 1-2-6 3-10s11-6 10-3" stroke="#6a8795" />
        </Svg>
      </button>
      <button type="button" aria-label="全屏" className="ml-2">
        <Svg w={18}>
          <rect x="1.500" y="1.500" width="15" height="15" rx="1" fill="#cfe5f1" stroke="#6f8793" />
          <path d="M2 2h14v6L2 12z" fill="#eaf5fa" />
          <path d="M16.500 3v13.500H3" stroke="#2f4b59" />
        </Svg>
      </button>
      <span className="ml-[11px] h-6 border-l border-[#a9aeaf]" />
    </footer>
  );
}

const apps: { label: string; running?: boolean; active?: boolean; icon: ReactNode }[] = [
  {
    label: 'Cortana',
    icon: (
      <Svg w={24}>
        <circle cx="11" cy="12" r="7" stroke="#fff" strokeWidth="2" />
      </Svg>
    ),
  },
  {
    label: '任务视图',
    icon: (
      <Svg w={24}>
        <path d="M3.500 4v3h9V4M3.500 20v-3h9v3M3.500 9.500h9v5h-9zM17.500 4v3M17.500 12v8" stroke="#fff" />
        <path d="M16 8h3v3h-3z" fill="#fff" />
      </Svg>
    ),
  },
  {
    label: 'Microsoft Edge',
    running: true,
    icon: (
      <Svg w={24}>
        <defs>
          <linearGradient id="edge" x1="0" y1="6" x2="24" y2="10" gradientUnits="userSpaceOnUse">
            <stop stopColor="#229bdc" />
            <stop offset=".6" stopColor="#36c0c9" />
            <stop offset="1" stopColor="#6bdc62" />
          </linearGradient>
        </defs>
        <circle cx="12" cy="12" r="12" fill="#1779cf" />
        <path d="M8 14c-1-4 1-6 4-6l3 8 7 2c-2 4-6 6-10 6-3-2-4-6-4-10z" fill="#124d94" />
        <path d="M0 12C0 5 5 0 12 0s12 5 12 10c0 4-3 6-6 6s-5-1-4-3c2-4-1-7-5-7-5 0-8 3-9 6z" fill="url(#edge)" />
        <path d="M11 12c0-2 2-2 3-1 1 2-1 3 1 5-3 0-4-2-4-4z" fill="#21353d" />
      </Svg>
    ),
  },
  {
    label: '文件资源管理器',
    icon: (
      <Svg w={24}>
        <path d="M1 3h9l1 2h11v15H1z" fill="#e3a92b" />
        <path d="M1 6h21v14H1z" fill="#fbd669" />
        <path d="M5 21v-7l2-1h9l2 1v7h-4v-3H9v3z" fill="#3c8dc4" />
      </Svg>
    ),
  },
  {
    label: 'Microsoft Store',
    icon: (
      <Svg w={24}>
        <path d="M6.500 6V1.500h11V6" stroke="#37a7dd" strokeWidth="2" />
        <path d="M1 5h22v16l-3 3H4l-3-3z" fill="#f7f8f8" />
        <path d="M7 10h4v4H7z" fill="#e64b2b" />
        <path d="M12 10h4v4h-4z" fill="#73b52d" />
        <path d="M7 15h4v4H7z" fill="#279bd9" />
        <path d="M12 15h4v4h-4z" fill="#f1b51e" />
      </Svg>
    ),
  },
  {
    label: '邮件',
    icon: (
      <Svg w={24}>
        <path d="M0 8l12-7 12 7v4H0z" fill="#0e5eae" />
        <path d="M2 8h20l-10 8z" fill="#fff" />
        <path d="M0 8l12 7 12-7v15H0z" fill="#2eaee8" />
        <path d="M24 8L8 18l9 5h7z" fill="#1f97e0" />
      </Svg>
    ),
  },
  {
    label: '录屏',
    running: true,
    icon: (
      <Svg w={24}>
        <defs>
          <linearGradient id="rec" x1="0" y1="24" x2="24" y2="0" gradientUnits="userSpaceOnUse">
            <stop stopColor="#7c2ab8" />
            <stop offset=".5" stopColor="#ef5a2a" />
            <stop offset="1" stopColor="#fdc01c" />
          </linearGradient>
        </defs>
        <rect width="24" height="24" rx="4" fill="url(#rec)" />
        <circle cx="7" cy="7" r="3" fill="#fff" />
        <circle cx="14" cy="7" r="4" fill="#fff" />
        <rect x="4" y="9" width="13" height="12" rx="2" fill="#fff" />
        <path d="M16 13l5-3v11l-5-3z" fill="#fff" />
      </Svg>
    ),
  },
  {
    label: 'Creo Parametric',
    running: true,
    active: true,
    icon: (
      <Svg w={24}>
        <path d="M0 0h24v24H0z" fill="#fff" />
        <path d="M4 4h16v16H4z" fill="#dfe3e4" stroke="#7f8b90" />
        <path d="M9 4h11v11H9z" fill="#1596d2" />
        <path d="M9 4h2v9h9v2H9z" fill="#3f5a68" />
        <path d="M4 17h16" stroke="#9fa9ad" />
      </Svg>
    ),
  },
];

function Taskbar() {
  return (
    <div className="flex h-10 bg-[#21353d]">
      <button type="button" aria-label="开始" className="flex w-12 items-center justify-center">
        <Svg w={16}>
          <path d="M0 2l6.500-1v6.500H0zM7.500 1L16 0v7.500H7.500zM0 8.500h6.500V15L0 14zM7.500 8.500H16V16l-8.500-1z" fill="#fff" />
        </Svg>
      </button>
      <label className="flex w-[344px] items-center gap-[11px] border border-[#c3c6c7] bg-[#efefef] pl-2.5">
        <Svg w={18}>
          <circle cx="11" cy="6.500" r="5.500" stroke="#1c1c1c" strokeWidth="1.500" />
          <path d="M7 10.500L1 17" stroke="#1c1c1c" strokeWidth="1.500" />
        </Svg>
        <input
          type="text"
          placeholder="搜索"
          className="min-w-0 flex-1 bg-transparent text-sm outline-none placeholder:text-[#2a2a2a]"
        />
      </label>
      {apps.map(({ label, icon, running, active }) => (
        <button
          key={label}
          type="button"
          aria-label={label}
          className={clsx('flex w-[49px] flex-col items-center pt-2', active && 'bg-[#4c5d64]')}
        >
          {icon}
          {running && <span className={clsx('mt-1.5 h-0.5 bg-[#76b9ed]', active ? 'w-full' : 'w-10')} />}
        </button>
      ))}
    </div>
  );
}

export default function App() {
  return (
    <div className="flex min-h-screen flex-col bg-[#e7e9ed] font-['Noto_Sans','Noto_Sans_CJK_SC',sans-serif] text-[#3d4244]">
      <TitleBar />
      <TabBar />
      <Ribbon />
      <div className="flex flex-1">
        <ModelTree />
        <GraphicsArea />
      </div>
      <StatusBar />
      <Taskbar />
    </div>
  );
}
